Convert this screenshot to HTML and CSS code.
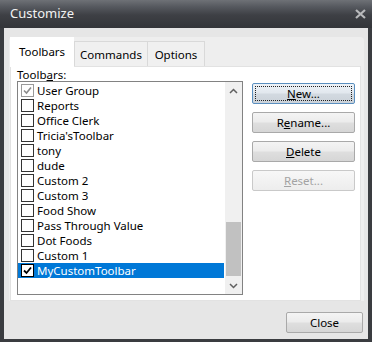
FILE: index.html
```html
<!DOCTYPE html>
<html>
<head>
<meta charset="utf-8">
<link rel="stylesheet" href="styles.css">
</head>
<body>
<div class="window">
  <div class="titlebar">
    <span class="title">Customize</span>
    <svg class="x" width="11" height="10" viewBox="0 0 11 10"><path d="M1 1 L10 9 M10 1 L1 9" stroke="#b8b9bb" stroke-width="2.2" fill="none"/></svg>
  </div>
  <div class="client">
    <div class="tabwrap">
      <div class="tabs">
        <div class="tab active">Toolbars</div>
        <div class="tab">Commands</div>
        <div class="tab">Options</div>
      </div>
      <div class="page">
        <div class="label">Toolb<u>a</u>rs:</div>
        <div class="row">
          <div class="list">
            <div class="items">
              <div class="item"><span class="cb dis"><svg width="11" height="11" viewBox="0 0 11 11"><path d="M2 5.5 L4.5 8 L9 2.5" stroke="#8c8c8c" stroke-width="1.6" fill="none"/></svg></span>User Group</div>
              <div class="item"><span class="cb"></span>Reports</div>
              <div class="item"><span class="cb"></span>Office Clerk</div>
              <div class="item"><span class="cb"></span>Tricia'sToolbar</div>
              <div class="item"><span class="cb"></span>tony</div>
              <div class="item"><span class="cb"></span>dude</div>
              <div class="item"><span class="cb"></span>Custom 2</div>
              <div class="item"><span class="cb"></span>Custom 3</div>
              <div class="item"><span class="cb"></span>Food Show</div>
              <div class="item"><span class="cb"></span>Pass Through Value</div>
              <div class="item"><span class="cb"></span>Dot Foods</div>
              <div class="item"><span class="cb"></span>Custom 1</div>
              <div class="item sel"><span class="cb on"><svg width="11" height="11" viewBox="0 0 11 11"><path d="M2 5.5 L4.5 8 L9 2.5" stroke="#000" stroke-width="1.8" fill="none"/></svg></span>MyCustomToolbar</div>
            </div>
            <div class="scroll">
              <div class="arrow"><svg width="9" height="6" viewBox="0 0 9 6"><path d="M1 5 L4.5 1.5 L8 5" stroke="#606060" stroke-width="1.5" fill="none"/></svg></div>
              <div class="track"><div class="thumb"></div></div>
              <div class="arrow"><svg width="9" height="6" viewBox="0 0 9 6"><path d="M1 1 L4.5 4.5 L8 1" stroke="#606060" stroke-width="1.5" fill="none"/></svg></div>
            </div>
          </div>
          <div class="buttons">
            <div class="btn focus"><span class="ring"><u>N</u>ew...</span></div>
            <div class="btn">R<u>e</u>name...</div>
            <div class="btn"><u>D</u>elete</div>
            <div class="btn disabled"><u>R</u>eset...</div>
          </div>
        </div>
      </div>
    </div>
    <div class="footer">
      <div class="btn close">Close</div>
    </div>
  </div>
</div>
</body>
</html>
```

FILE: styles.css
```css
* { box-sizing: border-box; }
html, body { margin: 0; padding: 0; }
body {
  width: 372px; height: 342px; overflow: hidden;
  font-family: "Noto Sans", "Open Sans", sans-serif;
  font-size: 11.5px;
  color: #000;
}
.window {
  width: 372px; height: 342px;
  background: #3a3c40;
  display: flex; flex-direction: column;
}
.titlebar {
  height: 28px;
  background: linear-gradient(#6e7176 0px, #55585e 7px, #3e4045 15px, #333539 28px);
  display: flex; align-items: center; justify-content: space-between;
  padding: 0 6px 2px 10px;
}
.title { color: #f2f2f2; font-size: 13px; }
.x { margin-top: 2px; }
.client {
  margin: 0 4px 3px 4px;
  height: 311px;
  background: #e6e6e6;
  padding: 9px 5px 0 5px;
  display: flex; flex-direction: column;
}
.tabwrap {
  width: 355px;
  background: #eeeeee;
  border-radius: 4px 4px 0 0;
  padding: 0 0 0 1px;
}
.tabs { display: flex; height: 29px; align-items: flex-end; position: relative; z-index: 1; }
.tab {
  height: 25px;
  padding: 0 9px;
  display: flex; align-items: center;
  background: #f0f0f0;
  border: 1px solid #d9d9d9;
  border-bottom: none;
  margin-left: -1px;
  color: #000;
}
.tab:nth-child(2) { width: 74px; justify-content: center; margin-left: 0; }
.tab:nth-child(3) { width: 58px; justify-content: center; }
.tab.active {
  height: 30px;
  width: 64px;
  background: #fff;
  border-color: #fff;
  justify-content: center;
  margin-left: 0;
  margin-bottom: -1px;
  padding-bottom: 3px;
}
.page {
  width: 351px; height: 235px;
  background: #fff;
  border: 1px solid #e2e2e2;
  padding: 1px 0 0 6px;
}
.label { height: 13px; line-height: 13px; }
u { text-decoration: underline; text-underline-offset: 1px; }
.row { display: flex; margin-top: 0; }
.list {
  width: 226px; height: 214px;
  border: 1px solid #828282;
  display: flex;
}
.items { flex: 1; padding: 1px 0 0 0; }
.item {
  height: 15px; line-height: 15px;
  display: flex; align-items: center;
  padding-left: 3px;
  white-space: nowrap;
}
.cb {
  width: 13px; height: 13px;
  border: 1px solid #333;
  background: #fff;
  margin-right: 3px;
  display: flex; align-items: center; justify-content: center;
  flex: none;
}
.cb.dis { border-color: #9a9a9a; }
.item.sel { background: #0078d7; color: #fff; margin-right: 1px; }
.cb.on { border-color: #000; }
.scroll {
  width: 17px;
  background: #f0f0f0;
  display: flex; flex-direction: column;
}
.arrow { height: 17px; display: flex; align-items: center; justify-content: center; }
.track { flex: 1; display: flex; flex-direction: column; justify-content: flex-end; padding: 0 0 1px 1px; }
.thumb { height: 54px; background: #c1c1c1; margin-right: 1px; }
.buttons {
  margin-left: 9px;
  padding-top: 2px;
  display: flex; flex-direction: column; gap: 8px;
}
.btn {
  width: 103px; height: 21px;
  border: 1px solid #a9a9a9;
  border-radius: 2px;
  background: linear-gradient(#f4f4f4 0%, #ececec 45%, #dedede 55%, #d6d6d6 100%);
  display: flex; align-items: center; justify-content: center;
  color: #000;
  padding-bottom: 1px;
}
.btn.focus {
  border-color: #5a8fbf;
  background: linear-gradient(#eef3f8 0%, #e2e8ee 45%, #d2d9e0 55%, #cbd2d9 100%);
  padding: 2px;
}
.ring {
  width: 100%; height: 100%;
  border: 1px dotted #222;
  display: flex; align-items: center; justify-content: center;
  padding-bottom: 1px;
}
.btn.disabled {
  color: #a3a3a3;
  border-color: #c9c9c9;
  background: linear-gradient(#f7f7f7, #ededed);
}
.footer {
  display: flex; justify-content: flex-end;
  padding: 11px 0 0 0;
}
.btn.close { width: 77px; }
```
